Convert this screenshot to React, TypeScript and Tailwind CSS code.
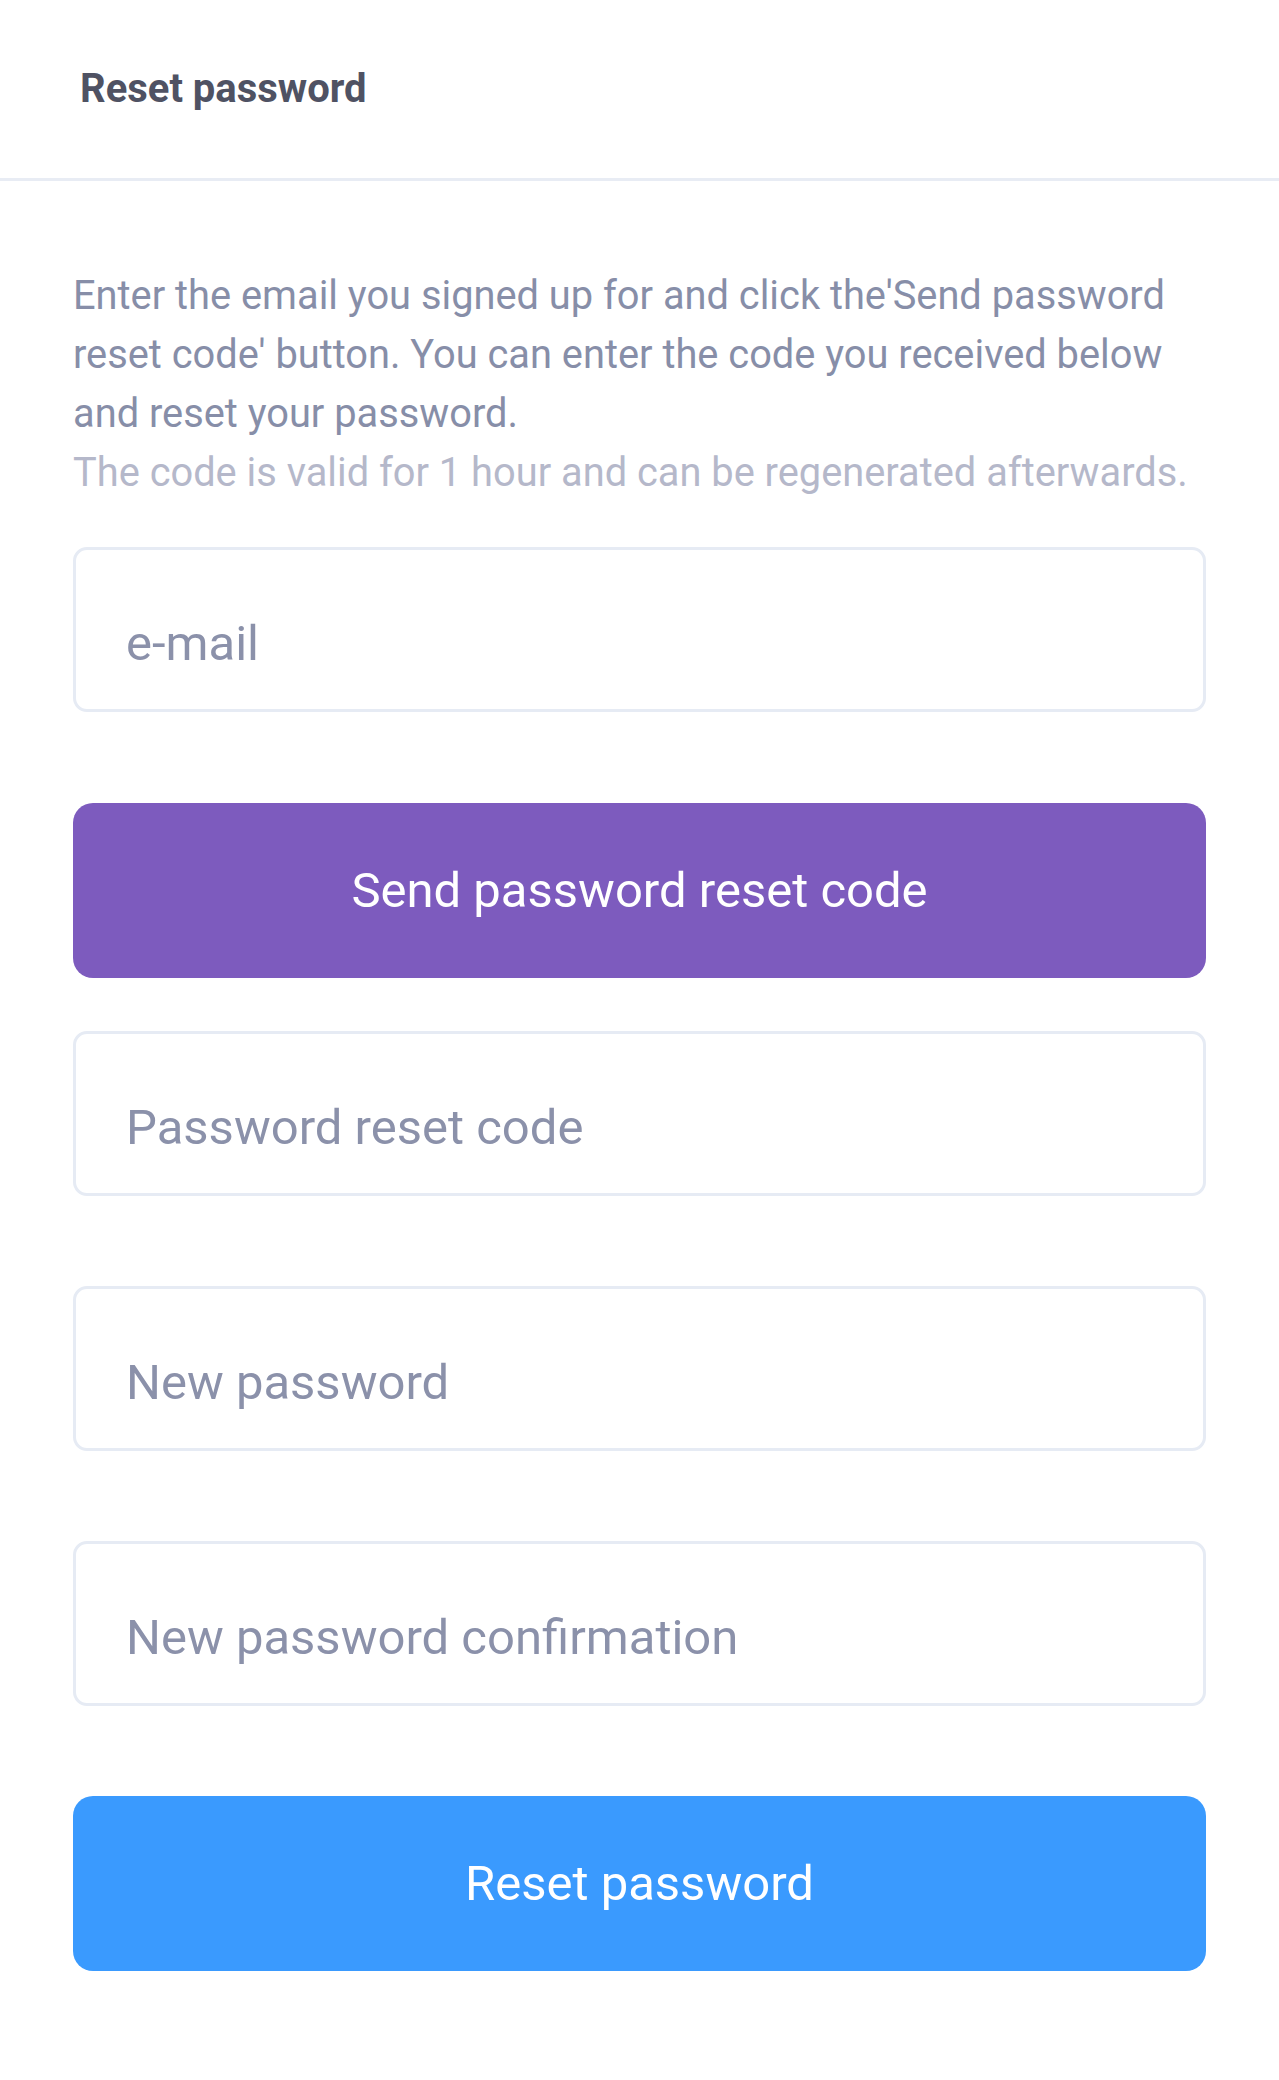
const fields = ["Password reset code", "New password", "New password confirmation"];

const Field = ({ placeholder, type = "text" }: { placeholder: string; type?: string }) => (
  <input
    type={type}
    placeholder={placeholder}
    className="h-[165px] w-full rounded-[14px] border-[3px] border-[#e6ebf4] bg-white px-[50px] pt-[28px] text-[49px] text-[#4b5064] outline-none placeholder:text-[#8b91aa]"
  />
);

const App = () => {
  return (
    <main className="min-h-screen bg-white font-['Roboto',sans-serif]">
      <header className="flex h-[181px] items-center border-b-[3px] border-[#e8ecf4] px-[80px]">
        <h1 className="text-[40px] font-bold text-[#4f5263]">Reset password</h1>
      </header>

      <div className="px-[73px] pt-[85px]">
        <p className="text-[39.8px] leading-[59px] text-[#878ea8]">
          Enter the email you signed up for and click the'Send password reset code' button. You can enter the code you
          received below and reset your password.
        </p>
        <p className="text-[39.8px] leading-[59px] text-[#b5b8ca]">
          The code is valid for 1 hour and can be regenerated afterwards.
        </p>

        <div className="mt-[45px]">
          <Field placeholder="e-mail" type="email" />
        </div>

        <button className="mt-[91px] h-[175px] w-full rounded-[20px] bg-[#7d5bbe] text-[49px] text-white">
          Send password reset code
        </button>

        <div className="mt-[53px] flex flex-col gap-[90px]">
          {fields.map((f) => (
            <Field key={f} placeholder={f} type={f === "Password reset code" ? "text" : "password"} />
          ))}
        </div>

        <button className="mt-[90px] h-[175px] w-full rounded-[20px] bg-[#3a9afe] text-[49px] text-white">
          Reset password
        </button>
      </div>
    </main>
  );
};

export default App;
